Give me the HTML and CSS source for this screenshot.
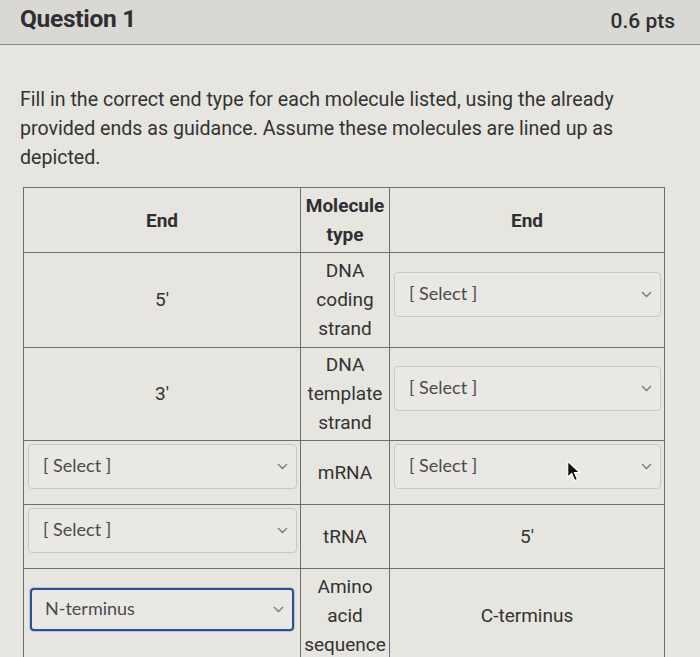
FILE: index.html
```html
<!DOCTYPE html>
<html>
<head>
<meta charset="utf-8">
<link rel="stylesheet" href="styles.css">
</head>
<body>
<header class="qhead">
  <span class="qtitle">Question 1</span>
  <span class="qpts">0.6 pts</span>
</header>
<main class="qbody">
  <p class="prompt">Fill in the correct end type for each molecule listed, using the already provided ends as guidance. Assume these molecules are lined up as depicted.</p>
  <table class="mtable">
    <colgroup>
      <col class="c1"><col class="c2"><col class="c3">
    </colgroup>
    <tr class="hrow">
      <th>End</th>
      <th>Molecule type</th>
      <th>End</th>
    </tr>
    <tr class="r1">
      <td>5'</td>
      <td>DNA coding strand</td>
      <td class="selcell"><div class="sel"><span>[ Select ]</span><svg class="chev" width="11" height="7" viewBox="0 0 11 7"><path d="M1 1 L5.5 5.5 L10 1" fill="none" stroke="#777" stroke-width="1.3"/></svg></div></td>
    </tr>
    <tr class="r2">
      <td>3'</td>
      <td>DNA template strand</td>
      <td class="selcell"><div class="sel"><span>[ Select ]</span><svg class="chev" width="11" height="7" viewBox="0 0 11 7"><path d="M1 1 L5.5 5.5 L10 1" fill="none" stroke="#777" stroke-width="1.3"/></svg></div></td>
    </tr>
    <tr>
      <td class="selcell"><div class="sel"><span>[ Select ]</span><svg class="chev" width="11" height="7" viewBox="0 0 11 7"><path d="M1 1 L5.5 5.5 L10 1" fill="none" stroke="#777" stroke-width="1.3"/></svg></div></td>
      <td>mRNA</td>
      <td class="selcell"><div class="sel"><span>[ Select ]</span><svg class="cursor" width="16" height="23" viewBox="0 0 14 20"><path d="M1.5 1 L1.5 15 L5 11.8 L7.6 18 L10 17 L7.4 10.9 L12 10.9 Z" fill="#111" stroke="#fff" stroke-width="1"/></svg><svg class="chev" width="11" height="7" viewBox="0 0 11 7"><path d="M1 1 L5.5 5.5 L10 1" fill="none" stroke="#777" stroke-width="1.3"/></svg></div></td>
    </tr>
    <tr>
      <td class="selcell"><div class="sel"><span>[ Select ]</span><svg class="chev" width="11" height="7" viewBox="0 0 11 7"><path d="M1 1 L5.5 5.5 L10 1" fill="none" stroke="#777" stroke-width="1.3"/></svg></div></td>
      <td>tRNA</td>
      <td>5'</td>
    </tr>
    <tr>
      <td class="selcell"><div class="sel focus"><span>N-terminus</span><svg class="chev" width="11" height="7" viewBox="0 0 11 7"><path d="M1 1 L5.5 5.5 L10 1" fill="none" stroke="#777" stroke-width="1.3"/></svg></div></td>
      <td>Amino acid sequence</td>
      <td>C-terminus</td>
    </tr>
  </table>
</main>
</body>
</html>
```
FILE: styles.css
```css
html, body {
  margin: 0;
  padding: 0;
}
body {
  background: #e6e5e0;
  color: #333331;
  font-family: Roboto, "Liberation Sans", sans-serif;
  width: 700px;
  height: 657px;
  overflow: hidden;
}
.qhead {
  height: 45px;
  box-sizing: border-box;
  background: #d9d8d4;
  border-bottom: 1px solid #8e8d89;
  display: flex;
  justify-content: space-between;
  align-items: center;
  padding: 0 25px 8px 20px;
}
.qtitle {
  font-size: 24.5px;
  font-weight: 700;
  letter-spacing: -0.3px;
  color: #2f2f31;
}
.qpts {
  font-size: 21px;
  font-weight: 500;
  color: #2f2f31;
  padding-top: 5px;
}
.qbody {
  padding: 40px 0 0 20px;
}
.prompt {
  margin: 0 0 15px 0;
  font-size: 19.6px;
  line-height: 29px;
  width: 640px;
  color: #333331;
}
.mtable {
  margin-left: 3px;
  border-collapse: collapse;
  table-layout: fixed;
  width: 641px;
}
.c1 { width: 277px; }
.c2 { width: 89px; }
.c3 { width: 275px; }
.mtable th, .mtable td {
  border: 1px solid #6f6e6a;
  padding: 3px 2px;
  text-align: center;
  vertical-align: middle;
  font-size: 19px;
  line-height: 29px;
}
.mtable th {
  font-weight: 700;
  color: #2f2f31;
}
.mtable .r1 td {
  padding-top: 3px;
  padding-bottom: 4px;
}
.mtable .r2 td {
  padding-top: 2px;
  padding-bottom: 3px;
}
.mtable td.selcell {
  padding: 3px 3px 4px 4px;
}
.sel {
  position: relative;
  height: 45px;
  box-sizing: border-box;
  margin-bottom: 11px;
  border: 1px solid #c9c8c3;
  border-radius: 4px;
  background: #e9e8e4;
  display: flex;
  align-items: center;
  justify-content: space-between;
  padding: 0 8px 0 14px;
  font-family: Lato, "Liberation Sans", sans-serif;
  font-size: 18px;
  color: #4a4a4d;
  text-align: left;
}
.sel span {
  padding-bottom: 2px;
}
.sel.focus {
  height: 43px;
  margin: 0 3px 11px 2px;
  border: 2px solid #2d4f91;
  box-shadow: 0 0 0 1px #b9c4d8;
  padding-left: 13px;
}
.chev {
  flex: none;
}
.cursor {
  position: absolute;
  left: 171px;
  top: 15px;
}
```
